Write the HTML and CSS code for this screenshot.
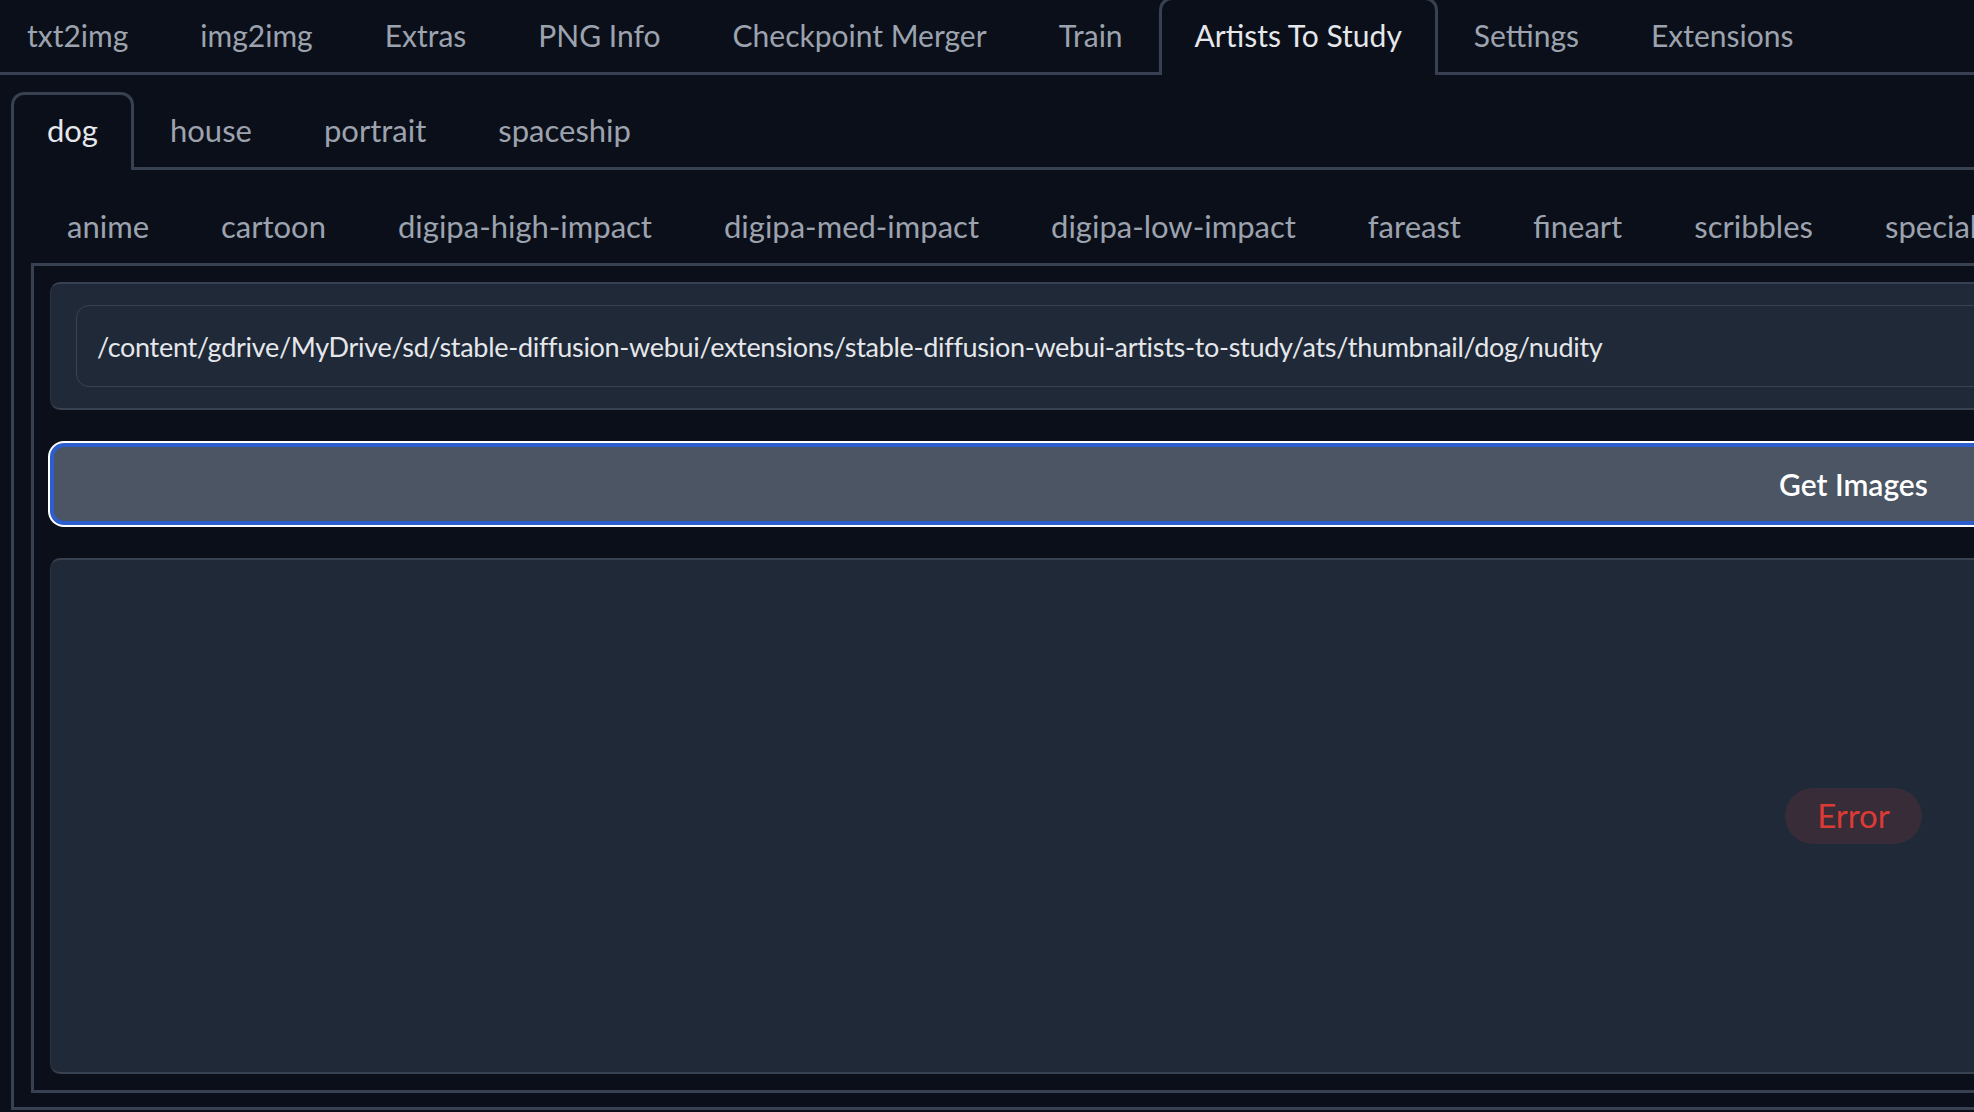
FILE: index.html
```html
<!DOCTYPE html>
<html lang="en">
<head>
<meta charset="utf-8">
<title>Artists To Study</title>
<link rel="stylesheet" href="styles.css">
</head>
<body>
<div class="app">
  <nav class="tabnav top-nav">
    <button class="tab">txt2img</button>
    <button class="tab">img2img</button>
    <button class="tab">Extras</button>
    <button class="tab">PNG Info</button>
    <button class="tab">Checkpoint Merger</button>
    <button class="tab">Train</button>
    <button class="tab sel">Artists To Study</button>
    <button class="tab">Settings</button>
    <button class="tab">Extensions</button>
  </nav>
  <div class="top-panel">
    <div class="tabs">
      <nav class="tabnav sub">
        <button class="tab sel">dog</button>
        <button class="tab">house</button>
        <button class="tab">portrait</button>
        <button class="tab">spaceship</button>
      </nav>
      <div class="panel outer">
        <div class="tabs">
          <nav class="tabnav sub">
            <button class="tab">anime</button>
            <button class="tab">cartoon</button>
            <button class="tab">digipa-high-impact</button>
            <button class="tab">digipa-med-impact</button>
            <button class="tab">digipa-low-impact</button>
            <button class="tab">fareast</button>
            <button class="tab">fineart</button>
            <button class="tab">scribbles</button>
            <button class="tab">special</button>
            <button class="tab">ue</button>
            <button class="tab sel">nudity</button>
          </nav>
          <div class="panel inner">
            <div class="block textbox">
              <div class="input">/content/gdrive/MyDrive/sd/stable-diffusion-webui/extensions/stable-diffusion-webui-artists-to-study/ats/thumbnail/dog/nudity</div>
            </div>
            <button class="btn">Get Images</button>
            <div class="block gallery">
              <span class="error">Error</span>
            </div>
          </div>
        </div>
      </div>
    </div>
  </div>
</div>
</body>
</html>
```

FILE: styles.css
```css
html, body {
  margin: 0;
  padding: 0;
  overflow: hidden;
  background: #0b0f19;
}

body {
  font-family: Lato, "Liberation Sans", sans-serif;
}

.app {
  width: 3707px;
}

.tabnav {
  display: flex;
  height: 78px;
  box-sizing: border-box;
  border-bottom: 3px solid #374151;
}

.top-nav {
  margin: -3px 0 0 -9px;
}

.tab {
  flex-shrink: 0;
  height: 78px;
  box-sizing: border-box;
  display: flex;
  align-items: center;
  padding: 0 33px 6px;
  border: 3px solid transparent;
  border-bottom: 0;
  border-radius: 13px 13px 0 0;
  background: transparent;
  color: #9ca3af;
  font-family: Lato, "Liberation Sans", sans-serif;
  font-size: 30px;
  font-weight: 400;
  white-space: nowrap;
}

.sub .tab {
  font-size: 31px;
}

.tab.sel {
  border-color: #374151;
  background: #0b0f19;
  color: #e5e7eb;
}

.top-panel {
  padding: 17px 11px 0;
}

.panel {
  border: 3px solid #374151;
  border-top: 0;
}

.panel.outer {
  padding: 18px 17px 14px;
}

.panel.inner {
  padding: 16px;
  display: flex;
  flex-direction: column;
  gap: 33px;
}

.block {
  background: #1f2937;
  border: 2px solid #374151;
  border-left: 1px solid #2b3340;
  border-right: 1px solid #2b3340;
  border-radius: 10px;
  box-sizing: border-box;
}

.textbox {
  padding: 21px 25px;
}

.input {
  height: 82px;
  box-sizing: border-box;
  display: flex;
  align-items: center;
  padding: 0 20px;
  border: 1px solid #3a4352;
  border-radius: 13px;
  background: #1f2937;
  color: #e5e7eb;
  font-size: 27px;
  letter-spacing: -0.3px;
  white-space: nowrap;
}

.btn {
  height: 82px;
  box-sizing: border-box;
  border: 4px solid #2c5fcd;
  border-radius: 14px;
  box-shadow: 0 0 0 2px #ffffff;
  background: #4b5563;
  color: #ffffff;
  font-family: Lato, "Liberation Sans", sans-serif;
  font-size: 30px;
  font-weight: 600;
}

.gallery {
  height: 516px;
  display: flex;
  align-items: center;
  justify-content: center;
}

.error {
  height: 56px;
  box-sizing: border-box;
  display: flex;
  align-items: center;
  padding: 0 32px 2px;
  border-radius: 28px;
  background: rgba(239, 68, 68, 0.12);
  color: #dc3b35;
  font-size: 33px;
}
```
